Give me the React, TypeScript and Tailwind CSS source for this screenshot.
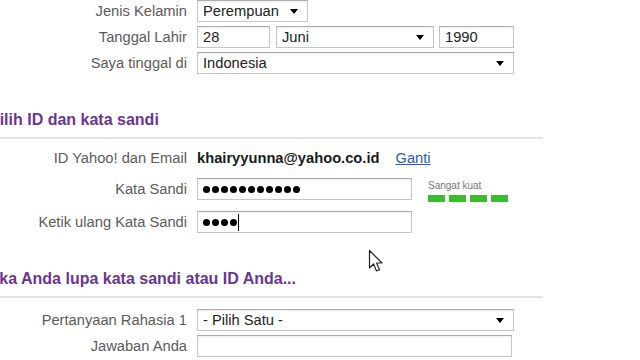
import React from "react";

const box =
  "h-[22px] border border-[#c6c6c6] border-t-[#ababab] bg-white shadow-[inset_0_1px_2px_rgba(0,0,0,0.08)] flex items-center pl-[5px] text-[14.7px] text-[#222]";

const Arrow: React.FC = () => (
  <span className="ml-auto mr-[9px] w-0 h-0 border-l-[4px] border-r-[4px] border-t-[5px] border-l-transparent border-r-transparent border-t-black" />
);

const Row: React.FC<{ label: string; className?: string; children?: React.ReactNode }> = ({
  label,
  className = "",
  children,
}) => (
  <div className={`flex items-center ${className}`}>
    <div className="w-[187px] shrink-0 text-right text-[14.7px] text-[#5b5b5b] leading-[22px] whitespace-nowrap">
      {label}
    </div>
    <div className="ml-[10px] flex items-center">{children}</div>
  </div>
);

const Dots: React.FC<{ n: number }> = ({ n }) => (
  <div className="flex items-center gap-[2px]">
    {Array.from({ length: n }).map((_, i) => (
      <span key={i} className="w-[7px] h-[7px] rounded-full bg-black" />
    ))}
  </div>
);

// the page is scrolled a little to the right, so headings start off-screen
const Heading: React.FC<{ text: string; shift: string; className?: string }> = ({
  text,
  shift,
  className = "",
}) => (
  <div className={`border-b-2 border-[#e4e4e4] w-[543px] pb-[8px] ${className}`}>
    <div className={`${shift} text-[16px] leading-[18px] font-bold text-[#6a3592] whitespace-nowrap`}>{text}</div>
  </div>
);

export default function App() {
  return (
    <div
      className="relative w-[640px] h-[360px] overflow-hidden bg-white"
      style={{ fontFamily: '"Liberation Sans", Arial, sans-serif' }}
    >
      <Row label="Jenis Kelamin">
        <div className={`${box} w-[111px]`}>
          Perempuan
          <Arrow />
        </div>
      </Row>
      <Row label="Tanggal Lahir" className="mt-[4px]">
        <div className={`${box} w-[73px]`}>28</div>
        <div className={`${box} w-[158px] ml-[6px]`}>
          Juni
          <Arrow />
        </div>
        <div className={`${box} w-[75px] ml-[5px]`}>1990</div>
      </Row>
      <Row label="Saya tinggal di" className="mt-[4px]">
        <div className={`${box} w-[317px]`}>
          Indonesia
          <Arrow />
        </div>
      </Row>

      <Heading text="Pilih ID dan kata sandi" shift="ml-[-11px]" className="mt-[37px]" />

      <Row label="ID Yahoo! dan Email" className="mt-[8px]">
        <span className="text-[14.7px] font-bold text-[#1a1a1a]">khairyyunna@yahoo.co.id</span>
        <a className="ml-[16px] text-[14.7px] text-[#2a5db0] underline">Ganti</a>
      </Row>
      <div className="flex items-start mt-[9px]">
        <Row label="Kata Sandi">
          <div className={`${box} w-[215px]`}>
            <Dots n={11} />
          </div>
        </Row>
        <div className="ml-[16px] pt-[2px]">
          <div className="text-[10px] leading-[12px] text-[#777]">Sangat kuat</div>
          <div className="flex gap-[4px] mt-[3px]">
            <span className="w-[17px] h-[7px] bg-[#3dbb2f]" />
            <span className="w-[17px] h-[7px] bg-[#3dbb2f]" />
            <span className="w-[17px] h-[7px] bg-[#3dbb2f]" />
            <span className="w-[17px] h-[7px] bg-[#3dbb2f]" />
          </div>
        </div>
      </div>
      <Row label="Ketik ulang Kata Sandi" className="mt-[9px]">
        <div className={`${box} w-[215px] border-[#86aedb] border-t-[#86aedb]`}>
          <Dots n={4} />
          <span className="ml-[1px] w-[1px] h-[17px] bg-black" />
        </div>
      </Row>

      <Heading text="Jika Anda lupa kata sandi atau ID Anda..." shift="ml-[-14px]" className="mt-[37px]" />

      <Row label="Pertanyaan Rahasia 1" className="mt-[11px]">
        <div className={`${box} w-[317px]`}>
          - Pilih Satu -
          <Arrow />
        </div>
      </Row>
      <Row label="Jawaban Anda" className="mt-[4px]">
        <div className={`${box} w-[315px]`} />
      </Row>
      <Row label="" className="mt-[3px]">
        <div className={`${box} w-[317px]`} />
      </Row>

      <svg className="absolute left-[368px] top-[249px]" width="18" height="26" viewBox="0 0 18 26">
        <path
          d="M1.5 1.5 L1.5 19 L5.5 15 L8.5 22 L11.5 20.7 L8.6 14 L14 14 Z"
          fill="white"
          stroke="#222"
          strokeWidth="1.2"
          strokeLinejoin="round"
        />
      </svg>
    </div>
  );
}
